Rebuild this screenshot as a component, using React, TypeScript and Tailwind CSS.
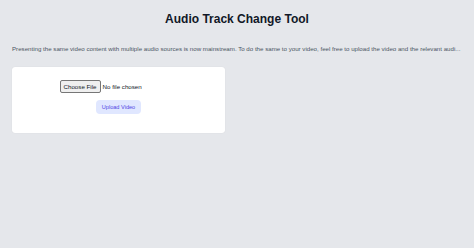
import { useState } from 'react';

export default function App() {
  const [file, setFile] = useState<File | null>(null);

  return (
    <div className="min-h-screen bg-[#e5e7eb] px-3 pt-[11px] font-['Liberation_Sans',Arial,sans-serif]">
      <h1 className="text-center text-[12px] leading-[16px] font-bold text-[#111827]">Audio Track Change Tool</h1>

      <p className="mt-[18px] whitespace-nowrap text-[6.15px] leading-[8px] text-[#4b5563]">
        Presenting the same video content with multiple audio sources is now mainstream. To do the same to your video,
        feel free to upload the video and the relevant audi...
      </p>

      <div className="mt-[14px] flex w-[213px] flex-col items-center rounded-[3px] bg-white pt-[13px] pb-[19px] shadow-[0_0_1px_rgba(0,0,0,0.12)]">
        <input
          type="file"
          accept="video/*"
          onChange={(e) => setFile(e.target.files?.[0] ?? null)}
          className="text-[6.2px] text-[#111827] file:mr-[2px] file:border file:border-[#767676] file:bg-[#efefef] file:px-[3px] file:py-[1px] file:text-[6.2px] file:rounded-[2px]"
        />
        <button
          disabled={!file}
          className="mt-[7px] rounded-sm bg-[#e0e7ff] px-[6px] py-[4px] text-[5.6px] leading-[6px] text-[#4f46e5]"
        >
          Upload Video
        </button>
      </div>
    </div>
  );
}
